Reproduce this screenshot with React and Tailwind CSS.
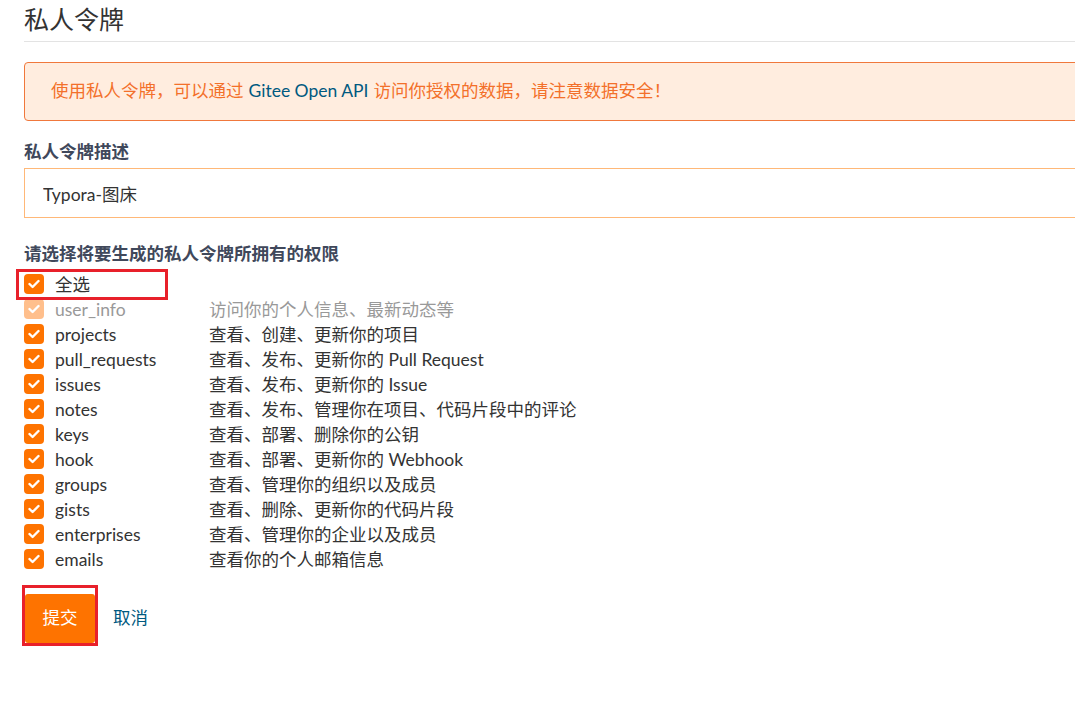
import { useState } from "react";

const FONT = 'Lato, "Noto Sans CJK SC", sans-serif';

const scopes = [
  { key: "user_info", desc: "访问你的个人信息、最新动态等", disabled: true },
  { key: "projects", desc: "查看、创建、更新你的项目" },
  { key: "pull_requests", desc: "查看、发布、更新你的 Pull Request" },
  { key: "issues", desc: "查看、发布、更新你的 Issue" },
  { key: "notes", desc: "查看、发布、管理你在项目、代码片段中的评论" },
  { key: "keys", desc: "查看、部署、删除你的公钥" },
  { key: "hook", desc: "查看、部署、更新你的 Webhook" },
  { key: "groups", desc: "查看、管理你的组织以及成员" },
  { key: "gists", desc: "查看、删除、更新你的代码片段" },
  { key: "enterprises", desc: "查看、管理你的企业以及成员" },
  { key: "emails", desc: "查看你的个人邮箱信息" },
];

function Check({ disabled }) {
  return (
    <span
      className={
        "flex h-5 w-5 shrink-0 items-center justify-center rounded-[4px] " +
        (disabled ? "bg-[#ffbf8c]" : "bg-[#fe7300]")
      }
    >
      <svg width="12" height="10" viewBox="0 0 12 10">
        <polyline
          points="1.5,5 4.6,8 10.5,2"
          fill="none"
          stroke="white"
          strokeWidth="2.4"
          strokeLinecap="round"
          strokeLinejoin="round"
        />
      </svg>
    </span>
  );
}

function App() {
  const [desc, setDesc] = useState("Typora-图床");

  return (
    <div className="h-[707px] w-full overflow-hidden bg-white text-[17.5px]" style={{ fontFamily: FONT }}>
      <div className="w-[1120px] pl-6">
        <h2 className="border-b border-[#e3e3e3] pt-[3px] pb-[6px] text-[25px] leading-8 text-[#333]">
          私人令牌
        </h2>

        <div className="mt-5 flex h-[59px] items-center rounded-[4px] border border-[#f0783c] bg-[#ffeddf] pl-[26px] text-[#f3702a]">
          使用私人令牌，可以通过 <span className="mx-[5px] text-[#005980]">Gitee Open API</span> 访问你授权的数据，请注意数据安全！
        </div>

        <div className="mt-[19px] font-bold leading-6 text-[#40485b]">私人令牌描述</div>
        <input
          value={desc}
          onChange={(e) => setDesc(e.target.value)}
          className="mt-[4px] block h-[50px] w-full border border-[#ffb878] px-[18px] text-[#333] outline-none"
        />

        <div className="mt-[24px] font-bold leading-6 text-[#40485b]">
          请选择将要生成的私人令牌所拥有的权限
        </div>

        <div className="mt-[8px] flex flex-col gap-[5px] leading-5 text-[#333]">
          <div className="relative flex h-5 items-center">
            <div className="absolute top-[-5px] left-[-8px] h-[31px] w-[152px] border-[3px] border-[#e8202a]" />
            <Check />
            <span className="ml-[11px] pt-[2px]">全选</span>
          </div>
          {scopes.map((s) => (
            <div key={s.key} className="flex h-5 items-center">
              <Check disabled={s.disabled} />
              <span className={"ml-[11px] w-[154px] pt-[2px] " + (s.disabled ? "text-[#999]" : "")}>{s.key}</span>
              <span className={"pt-[2px] " + (s.disabled ? "text-[#999]" : "")}>{s.desc}</span>
            </div>
          ))}
        </div>

        <div className="mt-[25px] flex items-center">
          <div className="relative ml-[1px]">
            <div className="absolute top-[-9px] left-[-3px] h-[61px] w-[76px] border-[3px] border-[#e8202a]" />
            <button className="relative h-[49px] w-[70px] rounded-[3px] bg-[#fe7300] text-white">
              提交
            </button>
          </div>
          <a href="#" className="ml-[18px] text-[#005980]">
            取消
          </a>
        </div>
      </div>
    </div>
  );
}

export default App;
